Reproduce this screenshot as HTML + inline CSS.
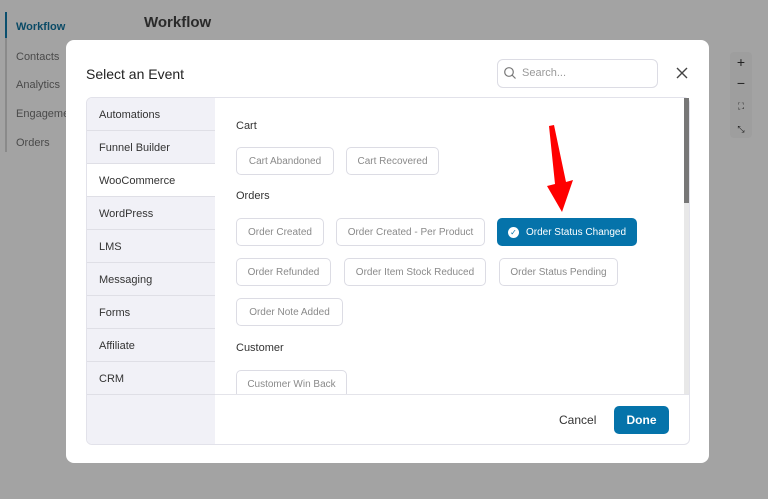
<!DOCTYPE html>
<html><head><style>
*{box-sizing:border-box;margin:0;padding:0}
body{width:768px;height:499px;background:#a3a3a3;font-family:"Liberation Sans",sans-serif;position:relative;overflow:hidden}
.a{position:absolute}
.nav{left:16px;font-size:11px;color:#4a4a4a}
.chip{position:absolute;height:28px;border:1px solid #dcdce4;border-radius:5px;font-size:10px;color:#8a8a8a;display:flex;align-items:center;justify-content:center;background:#fff;padding-top:1px}
.lab{position:absolute;left:236px;font-size:11px;color:#333}
.li{position:absolute;left:87px;width:128px;height:33px;border-bottom:1px solid #dfdfe6;font-size:11px;color:#333;padding-left:12px;line-height:34px}
</style></head><body>
<div class="a" style="left:5px;top:12px;width:2px;height:140px;background:#8a8a8a"></div>
<div class="a" style="left:5px;top:12px;width:2px;height:26px;background:#0a4f6e"></div>
<div class="a nav" style="top:21px;color:#0a4a66;font-weight:bold">Workflow</div>
<div class="a nav" style="top:51px">Contacts</div>
<div class="a nav" style="top:79px">Analytics</div>
<div class="a nav" style="top:108px">Engagement</div>
<div class="a nav" style="top:137px">Orders</div>
<div class="a" style="left:144px;top:14px;font-size:15px;font-weight:bold;color:#2a2a2a">Workflow</div>
<div class="a" style="left:730px;top:52px;width:22px;height:86px;background:#9e9e9e;border-radius:4px;color:#222;font-size:14px;text-align:center;line-height:21px">+<br>−<br><span style="font-size:9px">⛶</span><br><span style="font-size:9px">⤡</span></div>
<div class="a" style="left:66px;top:40px;width:643px;height:423px;background:#fff;border-radius:8px"></div>
<div class="a" style="left:86px;top:66px;font-size:14px;color:#222">Select an Event</div>
<div class="a" style="left:497px;top:59px;width:161px;height:29px;border:1px solid #dcdce4;border-radius:6px"></div>
<svg class="a" style="left:503px;top:66px" width="14" height="14" viewBox="0 0 14 14"><circle cx="6" cy="6" r="4.3" fill="none" stroke="#777" stroke-width="1.2"/><path d="M9 9l3.5 3.5" stroke="#777" stroke-width="1.2"/></svg>
<div class="a" style="left:522px;top:67px;font-size:11px;color:#999">Search...</div>
<svg class="a" style="left:676px;top:67px" width="12" height="12"><path d="M1 1l10 10M11 1L1 11" stroke="#444" stroke-width="1.4"/></svg>
<div class="a" style="left:86px;top:97px;width:604px;height:348px;border:1px solid #e2e2ea;border-radius:6px;overflow:hidden">
<div class="a" style="left:0;top:0;width:128px;height:348px;background:#f1f1f7"></div>
</div>
<div class="li" style="top:98px">Automations</div>
<div class="li" style="top:131px">Funnel Builder</div>
<div class="li" style="top:164px;background:#fff">WooCommerce</div>
<div class="li" style="top:197px">WordPress</div>
<div class="li" style="top:230px">LMS</div>
<div class="li" style="top:263px">Messaging</div>
<div class="li" style="top:296px">Forms</div>
<div class="li" style="top:329px">Affiliate</div>
<div class="li" style="top:362px">CRM</div>
<div class="a" style="left:684px;top:98px;width:5px;height:297px;background:#e8e8e8"></div>
<div class="a" style="left:684px;top:98px;width:5px;height:105px;background:#777"></div>
<div class="a" style="left:215px;top:394px;width:474px;height:1px;background:#e4e4ea"></div>
<div class="lab" style="top:120px">Cart</div>
<div class="chip" style="left:236px;top:147px;width:98px">Cart Abandoned</div>
<div class="chip" style="left:346px;top:147px;width:93px">Cart Recovered</div>
<div class="lab" style="top:190px">Orders</div>
<div class="chip" style="left:236px;top:218px;width:88px">Order Created</div>
<div class="chip" style="left:336px;top:218px;width:149px">Order Created - Per Product</div>
<div class="chip" style="left:497px;top:218px;width:140px;background:#0573aa;border-color:#0573aa;color:#fff"><span style="display:inline-block;width:11px;height:11px;border-radius:50%;background:#fff;color:#0573aa;font-size:8px;line-height:11px;text-align:center;margin-right:7px">✓</span>Order Status Changed</div>
<div class="chip" style="left:236px;top:258px;width:95px">Order Refunded</div>
<div class="chip" style="left:344px;top:258px;width:142px">Order Item Stock Reduced</div>
<div class="chip" style="left:499px;top:258px;width:119px">Order Status Pending</div>
<div class="chip" style="left:236px;top:298px;width:107px">Order Note Added</div>
<div class="lab" style="top:342px">Customer</div>
<div class="a" style="left:215px;top:365px;width:469px;height:29px;overflow:hidden"><div class="chip" style="left:21px;top:5px;width:111px">Customer Win Back</div></div>
<div class="a" style="left:559px;top:413px;font-size:12px;color:#333">Cancel</div>
<div class="a" style="left:614px;top:406px;width:55px;height:28px;background:#0573aa;border-radius:5px;color:#fff;font-size:12px;font-weight:bold;text-align:center;line-height:28px">Done</div>
<svg class="a" style="left:540px;top:122px" width="40" height="92"><path d="M9 4 L14 3 L26 60 L33 58 L22 90 L7 64 L15 62 Z" fill="#f00"/></svg>
</body></html>
